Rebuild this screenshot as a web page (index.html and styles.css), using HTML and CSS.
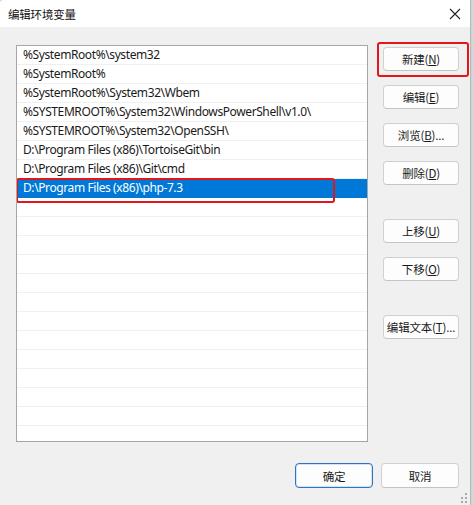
FILE: index.html
```html
<!DOCTYPE html>
<html lang="zh-CN">
<head>
<meta charset="utf-8">
<title>编辑环境变量</title>
<link rel="stylesheet" href="styles.css">
</head>
<body>
<div class="window">
  <div class="titlebar">
    <span class="title">编辑环境变量</span>
    <svg class="close" width="12" height="12" viewBox="0 0 12 12"><path d="M1 1L11 11M11 1L1 11" stroke="#222" stroke-width="1.1" fill="none"/></svg>
  </div>
  <div class="content">
    <div class="main">
      <div class="list">
        <div class="row">%SystemRoot%\system32</div>
        <div class="row">%SystemRoot%</div>
        <div class="row">%SystemRoot%\System32\Wbem</div>
        <div class="row">%SYSTEMROOT%\System32\WindowsPowerShell\v1.0\</div>
        <div class="row">%SYSTEMROOT%\System32\OpenSSH\</div>
        <div class="row">D:\Program Files (x86)\TortoiseGit\bin</div>
        <div class="row">D:\Program Files (x86)\Git\cmd</div>
        <div class="row selected">D:\Program Files (x86)\php-7.3</div>
        <div class="row"></div><div class="row"></div><div class="row"></div><div class="row"></div>
        <div class="row"></div><div class="row"></div><div class="row"></div><div class="row"></div>
        <div class="row"></div><div class="row"></div><div class="row"></div><div class="row"></div>
        <div class="mark mark-row"></div>
      </div>
      <div class="side">
        <div class="btn-wrap"><button class="btn">新建(<u>N</u>)</button><div class="mark mark-btn"></div></div>
        <button class="btn">编辑(<u>E</u>)</button>
        <button class="btn">浏览(<u>B</u>)...</button>
        <button class="btn">删除(<u>D</u>)</button>
        <button class="btn group">上移(<u>U</u>)</button>
        <button class="btn">下移(<u>O</u>)</button>
        <button class="btn group">编辑文本(<u>T</u>)...</button>
      </div>
    </div>
    <div class="footer">
      <button class="btn wide default">确定</button>
      <button class="btn wide">取消</button>
    </div>
  </div>
  <svg class="grip" width="8" height="10" viewBox="0 0 8 10"><g fill="#a8a8a8"><rect x="5" y="0" width="2" height="2"/><rect x="5" y="4" width="2" height="2"/><rect x="1" y="4" width="2" height="2"/><rect x="5" y="8" width="2" height="2"/><rect x="1" y="8" width="2" height="2"/></g></svg>
</div>
</body>
</html>
```
FILE: styles.css
```css
* { box-sizing: border-box; }
html, body { margin: 0; padding: 0; }
body {
  width: 474px;
  height: 505px;
  overflow: hidden;
  background: #d8d8d8;
  font-family: "Noto Sans", "Noto Sans CJK SC", sans-serif;
  font-size: 12px;
  color: #1a1a1a;
}
.window {
  position: relative;
  width: 471px;
  height: 505px;
  background: #f0f0f0;
  border-right: 1px solid #b9b9b9;
  box-shadow: 1px 0 2px #cfcfcf;
  display: flex;
  flex-direction: column;
  border-top-left-radius: 4px;
}
.titlebar {
  height: 27px;
  background: #ffffff;
  display: flex;
  align-items: center;
  justify-content: space-between;
  padding: 0 9px 0 8px;
  border-top-left-radius: 4px;
}
.title {
  font-family: "Noto Sans CJK SC", sans-serif;
  font-size: 11.5px;
  color: #111111;
  letter-spacing: -0.2px;
}
.close { display: block; }
.content {
  flex: 1;
  display: flex;
  flex-direction: column;
  padding: 18px 0 0 16px;
}
.main {
  display: flex;
}
.list {
  position: relative;
  width: 352px;
  height: 397px;
  background: #ffffff;
  border: 1px solid #a6a6a6;
  overflow: hidden;
}
.row {
  height: 19px;
  line-height: 18px;
  padding-left: 6px;
  border-bottom: 1px solid #f0f0f0;
  white-space: nowrap;
  letter-spacing: -0.4px;
  color: #1a1a1a;
}
.row.selected {
  background: #0078d7;
  color: #ffffff;
  border-bottom-color: #0078d7;
}
.mark {
  position: absolute;
  border: 2px solid #e3161b;
  border-radius: 3px;
  pointer-events: none;
}
.mark-row {
  left: -1px;
  top: 132px;
  width: 319px;
  height: 25px;
}
.side {
  display: flex;
  flex-direction: column;
  align-items: flex-start;
  margin-left: 15px;
  padding-top: 2px;
  gap: 14px;
}
.btn-wrap { position: relative; }
.mark-btn {
  left: -6px;
  top: -5px;
  width: 92px;
  height: 35px;
}
.btn {
  width: 76px;
  height: 24px;
  margin: 0;
  padding: 0;
  background: #fdfdfd;
  border: 1px solid #d0d0d0;
  border-bottom-color: #c4c4c4;
  border-radius: 4px;
  font-family: "Noto Sans CJK SC", sans-serif;
  font-size: 11.5px;
  color: #1a1a1a;
  display: flex;
  align-items: center;
  justify-content: center;
  white-space: nowrap;
  letter-spacing: -0.2px;
}
.btn u { text-underline-offset: 1px; }
.btn.group { margin-top: 20px; }
.footer {
  display: flex;
  justify-content: flex-end;
  gap: 8px;
  margin-top: 21px;
  padding-right: 11px;
}
.btn.wide { width: 78px; height: 25px; }
.btn.default {
  border: 1px solid #2b73c4;
  box-shadow: inset 0 0 0 1px #d3e3f5;
}
.grip {
  position: absolute;
  right: 2px;
  bottom: 2px;
}
```
